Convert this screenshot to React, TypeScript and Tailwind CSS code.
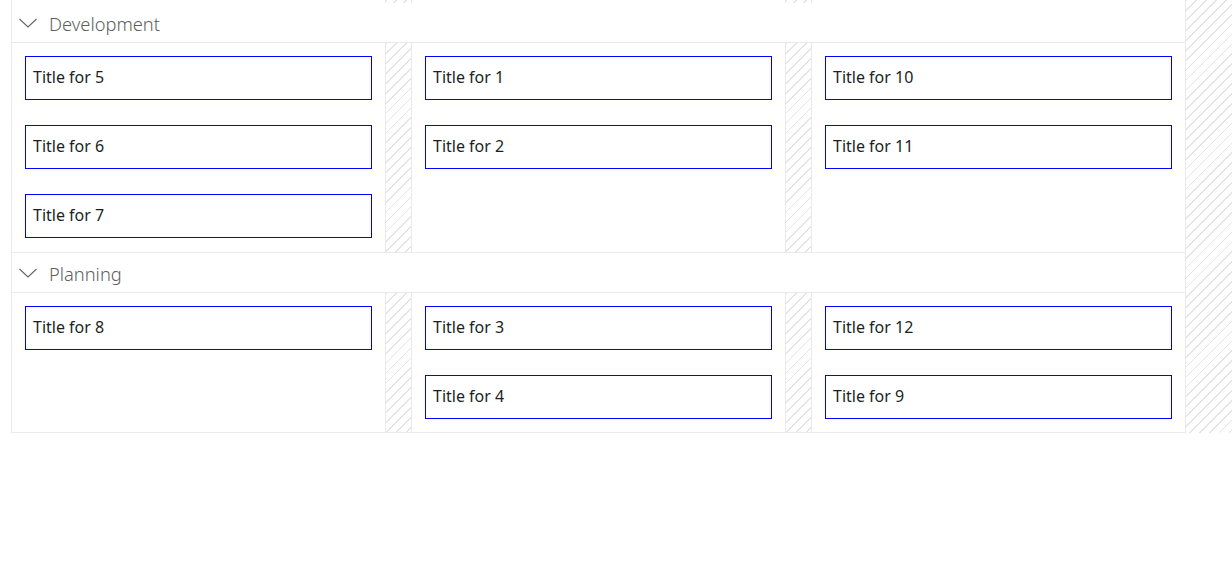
import React from "react";

const hatch =
  "bg-[repeating-linear-gradient(135deg,#e4e4e4_0px,#e4e4e4_1.2px,#ffffff_1.2px,#ffffff_7px)]";

function Chevron() {
  return (
    <svg width="18" height="10" viewBox="0 0 18 10" className="shrink-0">
      <path d="M0.5 1 L9 9 L17.5 1" fill="none" stroke="#666666" strokeWidth="1.1" />
    </svg>
  );
}

function Card({ title }: { title: string }) {
  return (
    <div className="h-[44px] border border-[#0000ff] flex items-center px-[7px] pb-[3px] text-[16px] text-[#201f1e] leading-none">
      {title}
    </div>
  );
}

function Column({ cards, gap, pb }: { cards: string[]; gap: string; pb: string }) {
  return (
    <div className={`w-[375px] border-x border-[#eaeaea] px-[13px] pt-[13px] flex flex-col ${gap} ${pb}`}>
      {cards.map((c) => (
        <Card key={c} title={c} />
      ))}
    </div>
  );
}

function Gutter() {
  return <div className={`w-[25px] ${hatch}`} />;
}

function Lane({ name, cols, gap, pb }: { name: string; cols: string[][]; gap: string; pb: string }) {
  return (
    <div className="flex flex-col">
      <div className="h-[40px] border-b border-x border-[#eaeaea] flex items-center pl-[7px] gap-[12px]">
        <Chevron />
        <span className="text-[18.3px] font-light text-[#605e5c] leading-none pt-[4px]">{name}</span>
      </div>
      <div className="flex border-b border-[#eaeaea]">
        <Column cards={cols[0]} gap={gap} pb={pb} />
        <Gutter />
        <Column cards={cols[1]} gap={gap} pb={pb} />
        <Gutter />
        <Column cards={cols[2]} gap={gap} pb={pb} />
      </div>
    </div>
  );
}

export default function App() {
  return (
    <div
      className="w-[1232px] h-[562px] bg-white flex items-start"
      style={{ fontFamily: '"Segoe UI", "Noto Sans", "Open Sans", sans-serif' }}
    >
      <div className="w-[11px] shrink-0" />
      <div className="flex flex-col w-[1175px] shrink-0">
        <div className="flex h-[3px]">
          <div className="w-[375px] border-x border-[#eaeaea]" />
          <Gutter />
          <div className="w-[375px] border-x border-[#eaeaea]" />
          <Gutter />
          <div className="w-[375px] border-x border-[#eaeaea]" />
        </div>
        <Lane
          name="Development"
          gap="gap-[25px]"
          pb="pb-[14px]"
          cols={[
            ["Title for 5", "Title for 6", "Title for 7"],
            ["Title for 1", "Title for 2"],
            ["Title for 10", "Title for 11"],
          ]}
        />
        <Lane
          name="Planning"
          gap="gap-[25px]"
          pb="pb-[13px]"
          cols={[["Title for 8"], ["Title for 3", "Title for 4"], ["Title for 12", "Title for 9"]]}
        />
      </div>
      <div className={`w-[46px] h-[433px] ${hatch}`} />
    </div>
  );
}
